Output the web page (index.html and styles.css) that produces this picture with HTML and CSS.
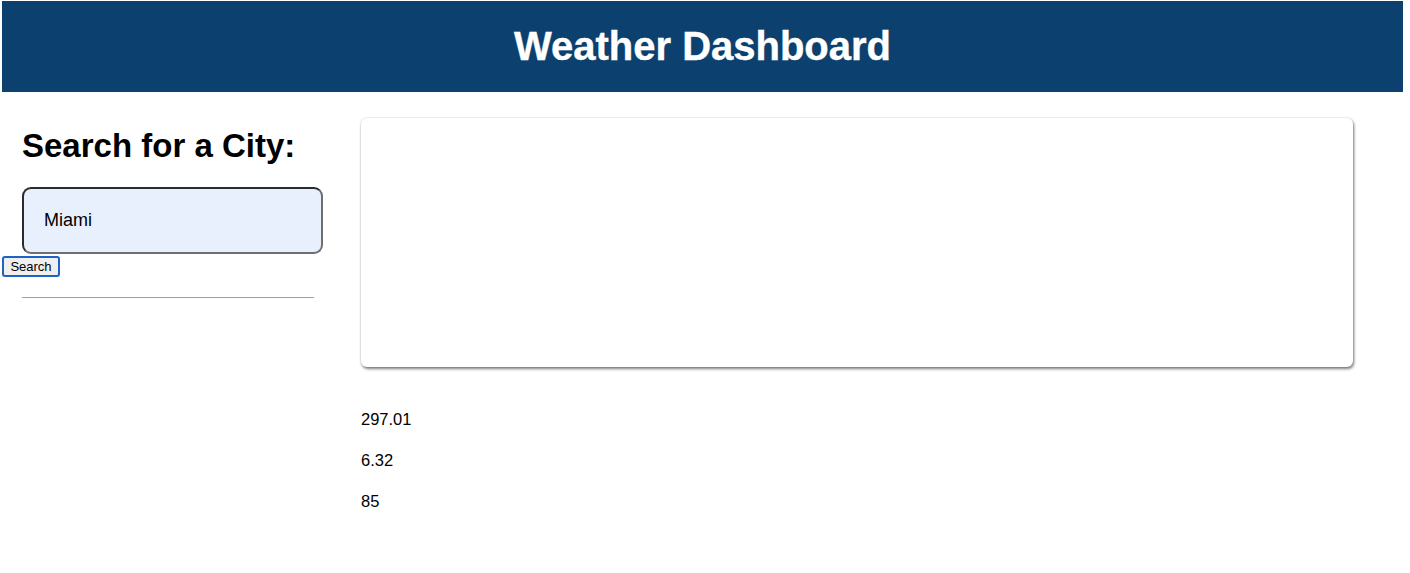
FILE: index.html
```html
<!DOCTYPE html>
<html>
<head>
<meta charset="utf-8">
<link rel="stylesheet" href="styles.css">
</head>
<body>
<header class="top">
  <h1 class="title">Weather Dashboard</h1>
</header>
<div class="layout">
  <aside class="side">
    <h2 class="side-title">Search for a City:</h2>
    <input class="city-input" type="text" value="Miami">
    <button class="search-btn">Search</button>
    <hr class="divider">
  </aside>
  <main class="content">
    <div class="card"></div>
    <div class="stats">
      <p class="stat">297.01</p>
      <p class="stat">6.32</p>
      <p class="stat">85</p>
    </div>
  </main>
</div>
</body>
</html>
```
FILE: styles.css
```css
html, body {
  margin: 0;
  padding: 0;
  background: #fff;
}
body {
  font-family: "Liberation Sans", Arial, sans-serif;
  color: #000;
  padding: 1px 7px 0 2px;
}
.top {
  background: #0c416f;
  height: 91px;
  display: flex;
  align-items: center;
  justify-content: center;
}
.title {
  margin: 0;
  color: #fff;
  font-size: 40px;
  font-weight: bold;
  -webkit-text-stroke: 0.4px #fff;
}
.layout {
  display: flex;
}
.side {
  width: 359px;
  flex: none;
  display: flex;
  flex-direction: column;
  align-items: flex-start;
}
.side-title {
  margin: 35px 0 0 20px;
  font-size: 33px;
  font-weight: bold;
  line-height: 37px;
}
.city-input {
  margin: 23px 0 0 20px;
  width: 301px;
  height: 67px;
  box-sizing: border-box;
  border: 2px solid #2b2b2b;
  border-bottom-color: #6f6f6f;
  border-right-color: #6f6f6f;
  border-radius: 9px;
  background: #e8f0fe;
  padding: 0 20px;
  font-family: "Liberation Sans", Arial, sans-serif;
  font-size: 18px;
  color: #000;
}
.search-btn {
  margin: 2px 0 0 0;
  height: 21px;
  width: 58px;
  padding: 0;
  font-family: "Liberation Sans", Arial, sans-serif;
  font-size: 13px;
  background: #efefef;
  border: 2px solid #1d63c7;
  border-radius: 3px;
  color: #000;
}
.divider {
  margin: 20px 0 0 20px;
  width: 292px;
  border: 0;
  border-top: 1px solid #a0a0a0;
  height: 0;
}
.content {
  flex: 1;
  padding-top: 26px;
  padding-right: 50px;
}
.card {
  height: 249px;
  border-radius: 6px;
  background: #fff;
  box-shadow: 1px 2px 3px rgba(0,0,0,0.5), 0 0 2px rgba(0,0,0,0.2);
}
.stats {
  padding-top: 24px;
}
.stat {
  margin: 16px 0;
  font-size: 16.5px;
  line-height: 25px;
}
```
